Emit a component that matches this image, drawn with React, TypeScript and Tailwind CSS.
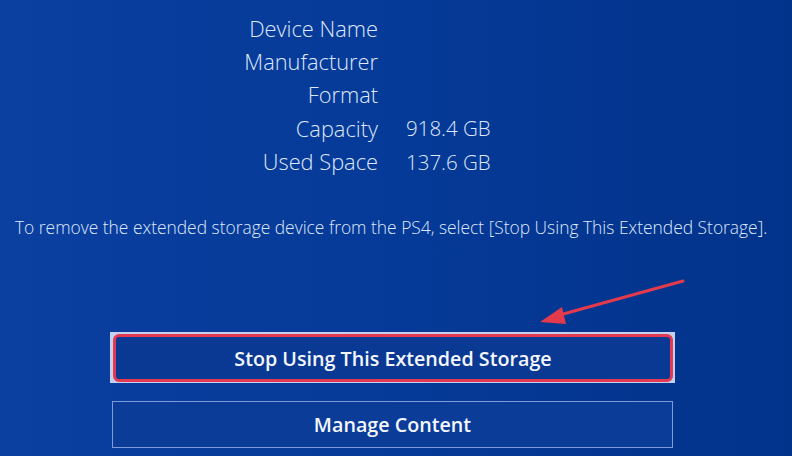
import React from "react";

const rows: [string, string][] = [
  ["Device Name", ""],
  ["Manufacturer", ""],
  ["Format", ""],
  ["Capacity", "918.4 GB"],
  ["Used Space", "137.6 GB"],
];

export default function App() {
  return (
    <div
      className="relative w-[792px] h-[456px] overflow-hidden bg-gradient-to-r from-[#0b3fa0] via-[#063a98] to-[#02338b] text-[#dfe8f9]"
      style={{ fontFamily: '"Open Sans", "Noto Sans", sans-serif' }}
    >
      <div className="flex flex-col pt-[12px]">
        <div className="grid grid-cols-[378px_1fr] gap-x-[28px]">
          {rows.map(([label, value]) => (
            <React.Fragment key={label}>
              <div className="h-[33.3px] flex items-center justify-end text-[21.8px] font-light leading-none">
                {label}
              </div>
              <div className="h-[33.3px] flex items-center text-[20.5px] font-light leading-none">
                {value}
              </div>
            </React.Fragment>
          ))}
        </div>
        <div className="mt-[37px] h-[24px] flex items-center pl-[15px] text-[17.4px] font-light whitespace-nowrap">
          To remove the extended storage device from the PS4, select [Stop Using This Extended Storage].
        </div>
        <div className="mt-[93px] ml-[110px] w-[565px] h-[51px] bg-[#c3d1ee] pl-[3px] pr-[2px] pt-[2px] pb-[1px]">
          <div className="h-full rounded-[6px] border-[3px] border-[#e33a52] bg-[#0a3993] flex items-center justify-center text-[19.7px] font-semibold text-[#f4f7fd]">
            Stop Using This Extended Storage
          </div>
        </div>
        <div className="mt-[18px] ml-[112px] w-[561px] h-[47px] border border-[#7e9ad8] bg-[#0a3c98] flex items-center justify-center text-[19.7px] font-semibold text-[#f4f7fd]">
          Manage Content
        </div>
      </div>
      <svg className="absolute left-0 top-0 pointer-events-none" width="792" height="456">
        <line x1="683" y1="281" x2="556" y2="316" stroke="#e33a4c" strokeWidth="3" strokeLinecap="round" />
        <polygon points="540,322 562,307 566,324" fill="#e33a4c" />
      </svg>
    </div>
  );
}
